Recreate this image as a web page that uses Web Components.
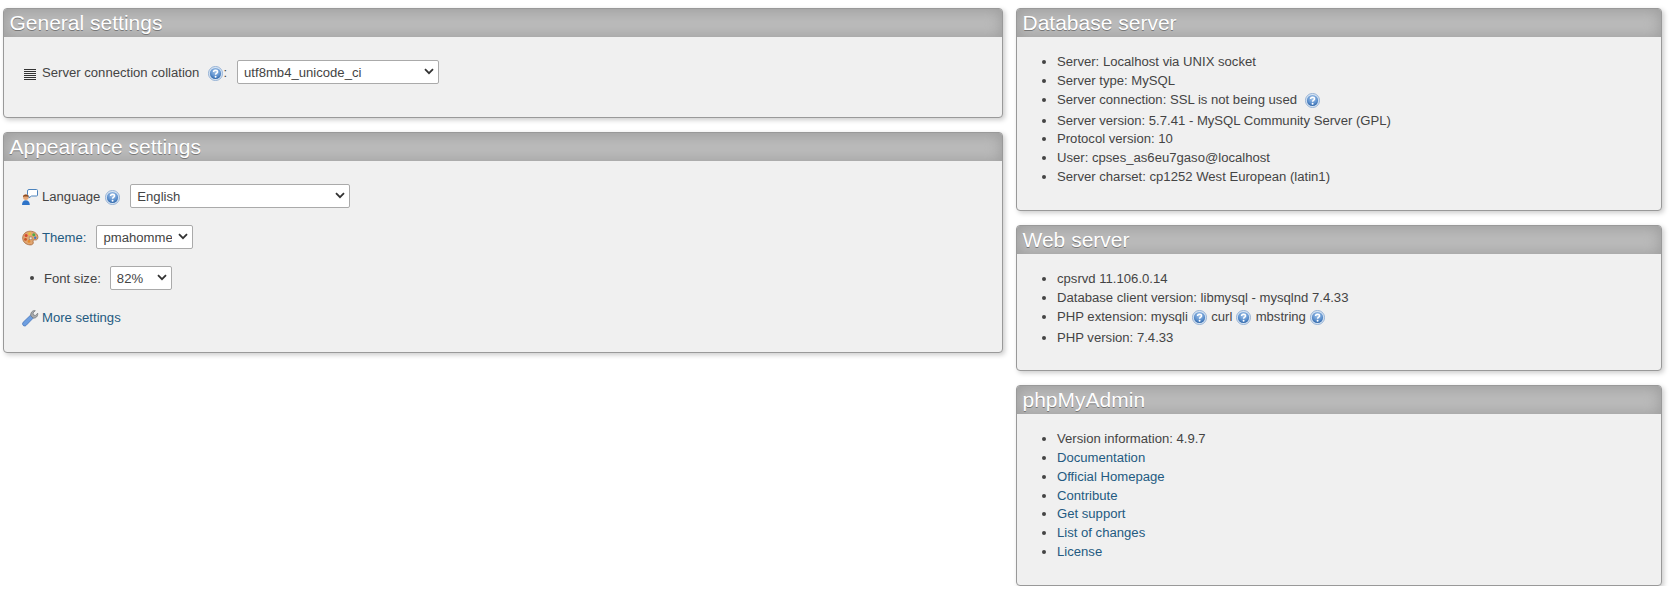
<!DOCTYPE html>
<html>
<head>
<meta charset="utf-8">
<title>phpMyAdmin</title>
<style>
    html, body { margin: 0; background: #fff; }
    body { font: 13.12px "Liberation Sans", Arial, sans-serif; color: #444; }
    a { color: #235a81; text-decoration: none; }
</style>
</head>
<body>

<pma-page>
    <pma-panel slot="left" heading="General settings" pad="23" height="110">
        <pma-row indent="18">
            <pma-icon type="collation"></pma-icon>
            <span>Server connection collation</span>
            <pma-help style="margin-left:8px"></pma-help><span>:</span>
            <pma-select width="202" style="margin-left:10px" value="utf8mb4_unicode_ci"></pma-select>
        </pma-row>
    </pma-panel>

    <pma-panel slot="left" heading="Appearance settings" pad="23" height="221">
        <pma-row indent="18">
            <pma-icon type="language"></pma-icon>
            <span>Language</span>
            <pma-help style="margin-left:4px"></pma-help>
            <pma-select width="220" style="margin-left:10px" value="English"></pma-select>
        </pma-row>
        <pma-row indent="18" style="margin-top:17px">
            <pma-icon type="theme"></pma-icon>
            <a href="#">Theme:</a>
            <pma-select width="97" style="margin-left:10px" value="pmahomme"></pma-select>
        </pma-row>
        <pma-row indent="19" style="margin-top:17px">
            <pma-bullet></pma-bullet>
            <span>Font size:</span>
            <pma-select width="62" style="margin-left:9px" value="82%"></pma-select>
        </pma-row>
        <pma-row indent="18" style="margin-top:19px;min-height:15px">
            <pma-icon type="wrench"></pma-icon>
            <a href="#">More settings</a>
        </pma-row>
    </pma-panel>

    <pma-panel slot="right" heading="Database server" pad="15" height="203">
        <pma-list>
            <li>Server: Localhost via UNIX socket</li>
            <li>Server type: MySQL</li>
            <li class="tall">Server connection: SSL is not being used <pma-help style="margin-left:4px"></pma-help></li>
            <li>Server version: 5.7.41 - MySQL Community Server (GPL)</li>
            <li>Protocol version: 10</li>
            <li>User: cpses_as6eu7gaso@localhost</li>
            <li>Server charset: cp1252 West European (latin1)</li>
        </pma-list>
    </pma-panel>

    <pma-panel slot="right" heading="Web server" pad="15" height="146">
        <pma-list>
            <li>cpsrvd 11.106.0.14</li>
            <li>Database client version: libmysql - mysqlnd 7.4.33</li>
            <li class="tall">PHP extension: mysqli <pma-help></pma-help> curl <pma-help></pma-help> mbstring <pma-help></pma-help></li>
            <li>PHP version: 7.4.33</li>
        </pma-list>
    </pma-panel>

    <pma-panel slot="right" heading="phpMyAdmin" pad="15" height="201">
        <pma-list>
            <li>Version information: 4.9.7</li>
            <li><a href="#">Documentation</a></li>
            <li><a href="#">Official Homepage</a></li>
            <li><a href="#">Contribute</a></li>
            <li><a href="#">Get support</a></li>
            <li><a href="#">List of changes</a></li>
            <li><a href="#">License</a></li>
        </pma-list>
    </pma-panel>
</pma-page>

<script>
// two column page
class PmaPage extends HTMLElement {
    constructor() {
        super();
        this.attachShadow({ mode: 'open' }).innerHTML = `
            <style>
                :host { display: flex; gap: 13px; padding: 8px 3px 0 3px; align-items: flex-start; }
                .left { flex: 0 0 1000px; display: flex; flex-direction: column; gap: 14px; }
                .right { flex: 0 0 646px; display: flex; flex-direction: column; gap: 14px; }
            </style>
            <div class="left"><slot name="left"></slot></div>
            <div class="right"><slot name="right"></slot></div>
        `;
    }
}

// grey box with a heading bar
class PmaPanel extends HTMLElement {
    constructor() {
        super();
        this.attachShadow({ mode: 'open' });
    }

    connectedCallback() {
        const pad = this.getAttribute('pad') || 15;
        const height = this.getAttribute('height');
        this.shadowRoot.innerHTML = `
            <style>
                :host {
                    display: block;
                    box-sizing: border-box;
                    height: ${height}px;
                    border: 1px solid #999;
                    border-radius: 4px;
                    background: #f0f0f0;
                    box-shadow: 2px 2px 5px #ccc;
                    overflow: hidden;
                }
                h2 {
                    margin: 0;
                    height: 28px;
                    box-sizing: border-box;
                    padding: 1px 5.5px 0;
                    background: #bbb;
                    color: #fff;
                    font-size: 21px;
                    line-height: 25px;
                    font-weight: normal;
                    text-shadow: 0 1px 0 #777;
                    box-shadow: 0 1px 15px #999 inset;
                }
                .body { padding-top: ${pad}px; }
            </style>
            <h2>${this.getAttribute('heading')}</h2>
            <div class="body"><slot></slot></div>
        `;
    }
}

// form row inside a panel
class PmaRow extends HTMLElement {
    constructor() {
        super();
        this.attachShadow({ mode: 'open' });
    }

    connectedCallback() {
        this.shadowRoot.innerHTML = `
            <style>
                :host {
                    display: flex;
                    align-items: center;
                    min-height: 24px;
                    padding-left: ${this.getAttribute('indent') || 0}px;
                }
            </style>
            <slot></slot>
        `;
    }
}

// bulleted list; the items stay in light DOM so the list styles them through slotted rules
class PmaList extends HTMLElement {
    constructor() {
        super();
        this.attachShadow({ mode: 'open' }).innerHTML = `
            <style>
                :host { display: block; padding-left: 40px; }
                ::slotted(li) { line-height: 19px; height: 18.85px; }
                ::slotted(li.tall) { height: 20.85px; }
            </style>
            <slot></slot>
        `;
    }
}

class PmaBullet extends HTMLElement {
    constructor() {
        super();
        this.attachShadow({ mode: 'open' }).innerHTML = `
            <style>
                :host { display: block; width: 21px; flex: none; }
                i { display: block; width: 4px; height: 4px; margin-left: 7px; border-radius: 50%; background: #444; }
            </style>
            <i></i>
        `;
    }
}

class PmaSelect extends HTMLElement {
    constructor() {
        super();
        this.attachShadow({ mode: 'open' });
    }

    connectedCallback() {
        const value = this.getAttribute('value');
        this.shadowRoot.innerHTML = `
            <style>
                :host { display: inline-block; flex: none; }
                .box { position: relative; width: ${this.getAttribute('width')}px; }
                select {
                    appearance: none;
                    display: block;
                    width: 100%;
                    height: 24px;
                    box-sizing: border-box;
                    margin: 0;
                    padding: 0 20px 0 6px;
                    border: 1px solid #aaa;
                    border-radius: 2px;
                    background: #fff;
                    color: #444;
                    font: 13.12px "Liberation Sans", Arial, sans-serif;
                }
                svg { position: absolute; right: 5px; top: 8px; pointer-events: none; }
            </style>
            <div class="box">
                <select><option>${value}</option></select>
                <svg width="10" height="7" viewBox="0 0 10 7"><path d="M1 1.2 5 5.2 9 1.2" fill="none" stroke="#333" stroke-width="1.8"/></svg>
            </div>
        `;
    }
}

// blue round help mark, box is 16 wide with the disc in the middle
class PmaHelp extends HTMLElement {
    constructor() {
        super();
        this.attachShadow({ mode: 'open' }).innerHTML = `
            <style>
                :host { display: inline-block; width: 16px; height: 15px; vertical-align: -4px; flex: none; margin-top: 3px; }
                svg { display: block; margin: 0 auto; }
            </style>
            <svg width="15" height="15" viewBox="0 0 14 14">
                <defs><radialGradient id="g" cx="50%" cy="30%" r="70%"><stop offset="0" stop-color="#a9c8ea"/><stop offset=".65" stop-color="#5f92cf"/><stop offset="1" stop-color="#2f66a8"/></radialGradient></defs>
                <circle cx="7" cy="7" r="6.6" fill="#d7e4f2" stroke="#7fa3cd" stroke-width=".7"/>
                <circle cx="7" cy="7" r="5.2" fill="url(#g)"/>
                <path d="M5.2 5.6C5.2 4.4 6 3.900 7 3.900 8.100 3.900 8.900 4.500 8.900 5.500 8.900 6.700 7.100 6.700 7.100 8.100" fill="none" stroke="#fff" stroke-width="1.4"/>
                <circle cx="7.100" cy="10" r=".9" fill="#fff"/>
            </svg>
        `;
    }
}

const ICONS = {
    collation: `<g fill="#333"><rect x="2" y="5" width="12" height="1"/><rect x="2" y="7" width="12" height="1"/><rect x="2" y="9" width="12" height="1"/><rect x="2" y="11" width="12" height="1"/><rect x="2" y="13" width="12" height="1"/><rect x="2" y="15" width="12" height="1"/></g>`,
    language: `<path d="M7 1.500h7.500a1 1 0 0 1 1 1v4.500a1 1 0 0 1-1 1H9.500L6.800 10V8A1.200 1.200 0 0 1 5.500 6.800V3A1.500 1.500 0 0 1 7 1.500Z" fill="#fff" stroke="#4c83bd" stroke-width="1"/>
        <circle cx="3.800" cy="9.300" r="2.700" fill="#e5a676"/><path d="M1 9C.9 7 2.500 6.300 3.900 6.400 5.400 6.500 6.600 7.300 6.500 9 5 8.500 2.800 8.300 1 9Z" fill="#8c4a20"/>
        <path d="M0 17C0 13.800 1.500 12.200 3.800 12.200S7.800 13.800 7.800 17Z" fill="#2f74c8"/>`,
    theme: `<path d="M.7 9C.7 5 4.200 2.100 8.300 2.200 12.400 2.300 16 4.800 15.900 8.500 15.800 10.900 14 11.100 12.500 10.900 11 10.800 10.700 11.800 11.200 13 11.700 14.500 10.500 16.100 8 15.900 4 15.600.7 13 .7 9Z" fill="#e0a672" stroke="#a8683a" stroke-width=".8"/>
        <circle cx="7.800" cy="4.800" r="1.500" fill="#e8c23a"/><circle cx="11.800" cy="5.700" r="1.500" fill="#4fa84a"/><circle cx="4.100" cy="6.400" r="1.500" fill="#d9472f"/><circle cx="3.500" cy="10.400" r="1.400" fill="#c9552a"/><circle cx="7" cy="12.400" r="1.400" fill="#e48a2c"/><rect x="7.200" y="8" width="2.800" height="2.800" fill="#f4e9dc" stroke="#8a6a4a" stroke-width=".5"/><circle cx="13.200" cy="8.800" r="1.200" fill="#3f78c4"/>`,
    wrench: `<g transform="translate(0 1)"><path d="M1.100 12.300 8.700 5 11.500 7.800 4.100 15.400C3.300 16.200 2.100 16.200 1.200 15.400 .400 14.600.300 13.100 1.100 12.300Z" fill="#6d9ee0" stroke="#3f6fb5" stroke-width=".7"/>
        <path d="M8.800 5.900C8.300 3.200 9.800.600 12.600.500L13.300.700 11 3 11.500 5 13.400 5.500 15.700 3.200C16.200 6.200 13.700 8.700 11.100 8Z" fill="#a9abae" stroke="#6f7275" stroke-width=".7"/></g>`
};

// 16px pictogram in front of a row's label
class PmaIcon extends HTMLElement {
    constructor() {
        super();
        this.attachShadow({ mode: 'open' });
    }

    connectedCallback() {
        this.shadowRoot.innerHTML = `
            <style>
                :host { display: block; width: 16px; height: 16px; margin-right: 4px; flex: none; }
                svg { display: block; overflow: visible; }
            </style>
            <svg width="16" height="18" viewBox="0 0 16 18">${ICONS[this.getAttribute('type')]}</svg>
        `;
    }
}

customElements.define('pma-page', PmaPage);
customElements.define('pma-panel', PmaPanel);
customElements.define('pma-row', PmaRow);
customElements.define('pma-list', PmaList);
customElements.define('pma-bullet', PmaBullet);
customElements.define('pma-select', PmaSelect);
customElements.define('pma-help', PmaHelp);
customElements.define('pma-icon', PmaIcon);
</script>
</body>
</html>
